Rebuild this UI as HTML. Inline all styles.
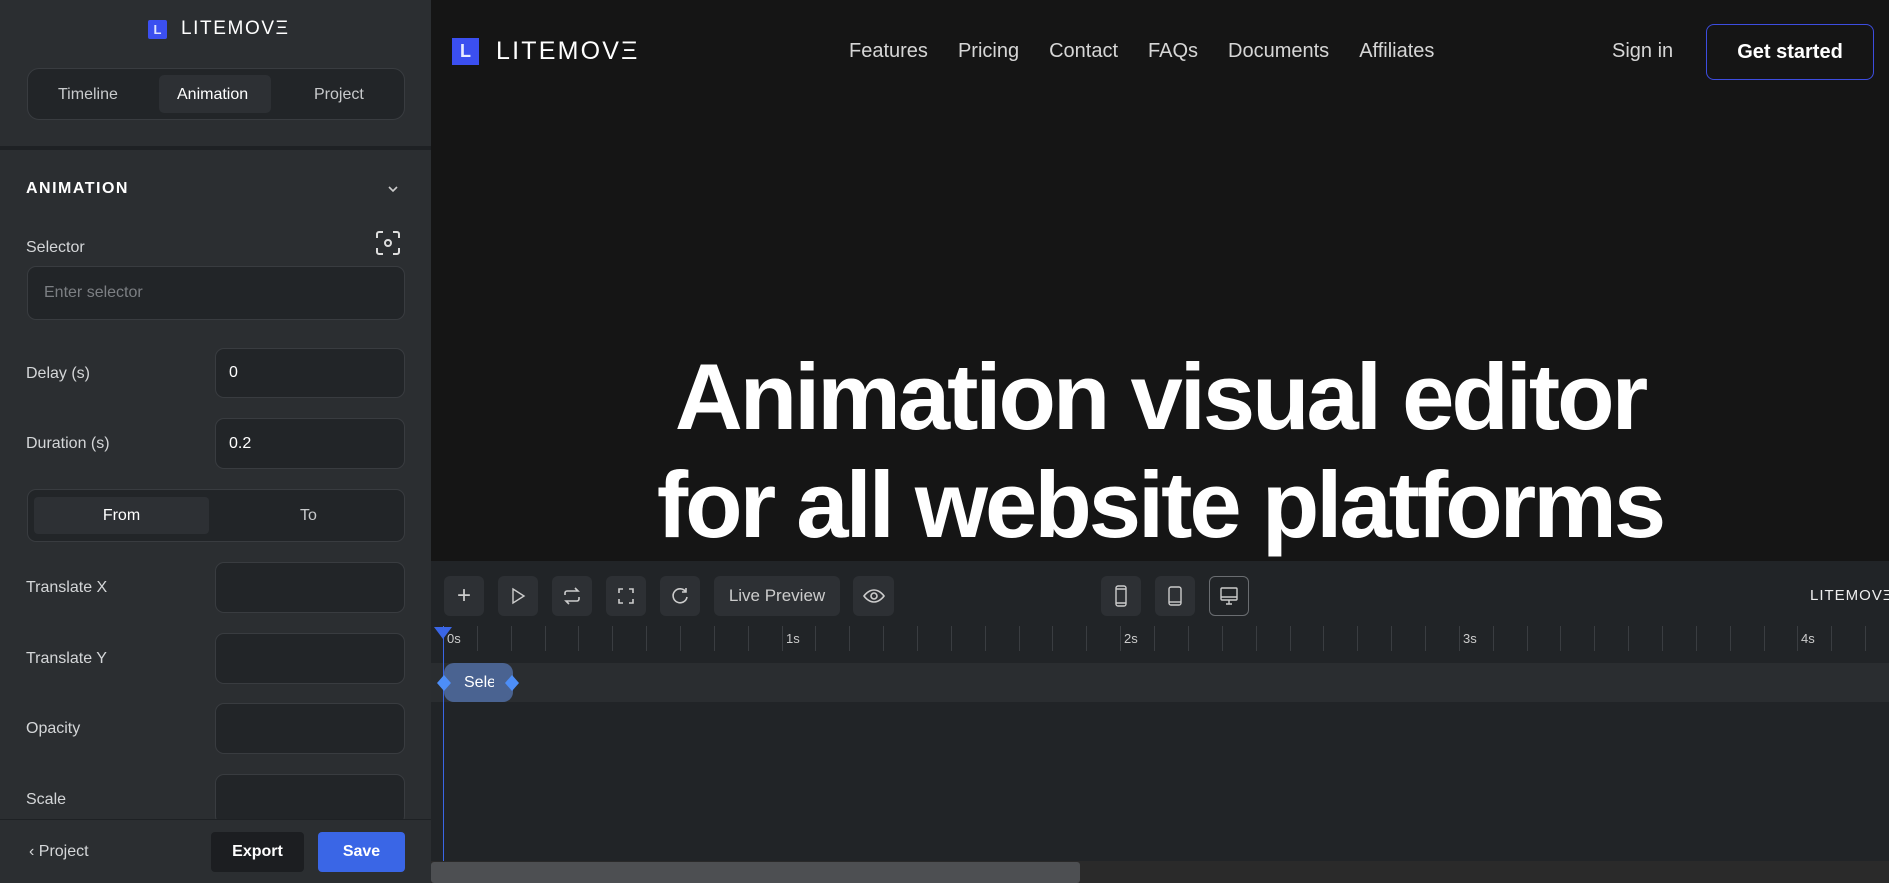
<!DOCTYPE html>
<html><head><meta charset="utf-8"><style>
*{box-sizing:border-box;margin:0;padding:0}
body{width:1889px;height:883px;overflow:hidden;background:#151515;font-family:"Liberation Sans",sans-serif;position:relative;color:#ddd}
.a{position:absolute}
#left{left:0;top:0;width:431px;height:883px;background:#2b2e31}
.lbl{position:absolute;left:26px;font-size:16px;color:#d4d6d8}
.inp{position:absolute;background:#222528;border:1px solid #393c40;border-radius:9px;font-size:16px;color:#fff;padding-left:13px;display:flex;align-items:center}
.tb{position:absolute;top:576px;height:40px;background:#2d3034;border-radius:6px;display:flex;align-items:center;justify-content:center;color:#ccc}
.tick{position:absolute;top:626px;width:1px;height:25px;background:#3a3d41}
.sec{position:absolute;top:631px;font-size:13px;color:#ccc}
</style></head><body>
<div id="left" class="a">
  <div class="a" style="left:148px;top:20px;width:19px;height:19px;background:#3b4ff0;border-radius:2px;color:#dfe3ff;font-size:13px;font-weight:bold;text-align:center;line-height:19px">L</div>
  <div class="a" style="left:181px;top:18px;font-size:19px;letter-spacing:1.6px;color:#fff">LITEMOVΞ</div>
  <div class="a" style="left:27px;top:68px;width:378px;height:52px;background:#222528;border:1px solid #393c40;border-radius:12px"></div>
  <div class="a" style="left:159px;top:75px;width:112px;height:38px;background:#2d3034;border-radius:5px"></div>
  <div class="a" style="left:58px;top:86px;font-size:16px;color:#c8cacc">Timeline</div>
  <div class="a" style="left:177px;top:86px;font-size:16px;color:#fff">Animation</div>
  <div class="a" style="left:314px;top:86px;font-size:16px;color:#c8cacc">Project</div>
  <div class="a" style="left:0;top:146px;width:431px;height:4px;background:#1e2124"></div>
  <div class="a" style="left:26px;top:180px;font-size:16px;font-weight:bold;letter-spacing:1.5px;color:#fff">ANIMATION</div>
  <svg class="a" style="left:386px;top:182px" width="14" height="14" viewBox="0 0 14 14"><path d="M3 5l4 4 4-4" stroke="#ccc" stroke-width="1.6" fill="none"/></svg>
  <div class="lbl" style="top:239px">Selector</div>
  <svg class="a" style="left:375px;top:230px" width="26" height="26" viewBox="0 0 26 26" fill="none" stroke="#ddd" stroke-width="2"><path d="M2 8V4a2 2 0 0 1 2-2h4M18 2h4a2 2 0 0 1 2 2v4M24 18v4a2 2 0 0 1-2 2h-4M8 24H4a2 2 0 0 1-2-2v-4"/><circle cx="13" cy="13" r="3"/></svg>
  <div class="inp" style="left:27px;top:266px;width:378px;height:54px;color:#7c7f83;padding-left:16px">Enter selector</div>
  <div class="lbl" style="top:365px">Delay (s)</div>
  <div class="inp" style="left:215px;top:348px;width:190px;height:50px">0</div>
  <div class="lbl" style="top:435px">Duration (s)</div>
  <div class="inp" style="left:215px;top:418px;width:190px;height:51px">0.2</div>
  <div class="a" style="left:27px;top:489px;width:378px;height:53px;background:#222528;border:1px solid #393c40;border-radius:9px"></div>
  <div class="a" style="left:34px;top:497px;width:175px;height:37px;background:#2d3034;border-radius:4px;text-align:center;line-height:37px;font-size:16px;color:#fff">From</div>
  <div class="a" style="left:300px;top:507px;font-size:16px;color:#c8cacc">To</div>
  <div class="lbl" style="top:579px">Translate X</div>
  <div class="inp" style="left:215px;top:562px;width:190px;height:51px"></div>
  <div class="lbl" style="top:650px">Translate Y</div>
  <div class="inp" style="left:215px;top:633px;width:190px;height:51px"></div>
  <div class="lbl" style="top:720px">Opacity</div>
  <div class="inp" style="left:215px;top:703px;width:190px;height:51px"></div>
  <div class="lbl" style="top:791px">Scale</div>
  <div class="inp" style="left:215px;top:774px;width:190px;height:51px"></div>
  <div class="a" style="left:0;top:819px;width:431px;height:64px;background:#2b2e31;border-top:1px solid #1e2124"></div>
  <div class="a" style="left:29px;top:843px;font-size:16px;color:#d4d6d8">‹ Project</div>
  <div class="a" style="left:211px;top:832px;width:93px;height:40px;background:#1c1e21;border-radius:4px;text-align:center;line-height:40px;font-size:16px;font-weight:bold;color:#fff">Export</div>
  <div class="a" style="left:318px;top:832px;width:87px;height:40px;background:#3a66e6;border-radius:4px;text-align:center;line-height:40px;font-size:16px;font-weight:bold;color:#fff">Save</div>
</div>

<!-- nav -->
<div class="a" style="left:452px;top:38px;width:27px;height:27px;background:#3b4ff0;color:#e8ebff;font-weight:bold;font-size:18px;text-align:center;line-height:27px">L</div>
<div class="a" style="left:496px;top:37px;font-size:25px;letter-spacing:2.2px;color:#fff">LITEMOVΞ</div>
<div class="a" style="left:849px;top:40px;font-size:20px;color:#d6d6d6;white-space:nowrap">
<span style="margin-right:30px">Features</span><span style="margin-right:30px">Pricing</span><span style="margin-right:30px">Contact</span><span style="margin-right:30px">FAQs</span><span style="margin-right:30px">Documents</span><span>Affiliates</span></div>
<div class="a" style="left:1612px;top:40px;font-size:20px;color:#d6d6d6">Sign in</div>
<div class="a" style="left:1706px;top:24px;width:168px;height:56px;border:1px solid #3d4de0;border-radius:8px;text-align:center;line-height:54px;font-size:20px;font-weight:bold;color:#fff">Get started</div>

<div class="a" style="left:431px;top:343px;width:1458px;text-align:center;font-size:94px;font-weight:bold;letter-spacing:-3px;line-height:108px;color:#fff;white-space:nowrap">Animation visual editor<br>for all website platforms</div>

<!-- timeline -->
<div class="a" style="left:431px;top:561px;width:1458px;height:322px;background:#212427"></div>
<div class="tb" style="left:444px;width:40px;font-size:24px">+</div>
<div class="tb" style="left:498px;width:40px"><svg width="18" height="18" viewBox="0 0 18 18"><path d="M4 2l11 7-11 7z" fill="none" stroke="#ccc" stroke-width="1.4"/></svg></div>
<div class="tb" style="left:552px;width:40px"><svg width="20" height="20" viewBox="0 0 20 20" fill="none" stroke="#ccc" stroke-width="1.6"><path d="M3 9V7a2 2 0 0 1 2-2h11l-3-3M17 11v2a2 2 0 0 1-2 2H4l3 3"/></svg></div>
<div class="tb" style="left:606px;width:40px"><svg width="18" height="18" viewBox="0 0 18 18" fill="none" stroke="#ccc" stroke-width="1.6"><path d="M2 6V2h4M12 2h4v4M16 12v4h-4M6 16H2v-4"/></svg></div>
<div class="tb" style="left:660px;width:40px"><svg width="20" height="20" viewBox="0 0 20 20" fill="none" stroke="#ccc" stroke-width="1.6"><path d="M16 6A7 7 0 1 0 17 11M16 2v4h-4"/></svg></div>
<div class="tb" style="left:714px;width:126px;font-size:17px;color:#ccc">Live Preview</div>
<div class="tb" style="left:853px;width:41px"><svg width="22" height="16" viewBox="0 0 22 16" fill="none" stroke="#ccc" stroke-width="1.6"><path d="M1 8s4-6 10-6 10 6 10 6-4 6-10 6S1 8 1 8z"/><circle cx="11" cy="8" r="3"/></svg></div>
<div class="tb" style="left:1101px;width:40px"><svg width="14" height="22" viewBox="0 0 14 22" fill="none" stroke="#ccc" stroke-width="1.4"><rect x="2" y="1" width="10" height="20" rx="2"/><path d="M2 4h10M2 18h10"/></svg></div>
<div class="tb" style="left:1155px;width:40px"><svg width="16" height="22" viewBox="0 0 16 22" fill="none" stroke="#ccc" stroke-width="1.4"><rect x="2" y="2" width="12" height="18" rx="2"/><path d="M2 17h12"/></svg></div>
<div class="tb" style="left:1209px;width:40px;background:#212427;border:1px solid #6a6d71"><svg width="20" height="20" viewBox="0 0 20 20" fill="none" stroke="#ccc" stroke-width="1.4"><rect x="2" y="2" width="16" height="12" rx="1"/><path d="M2 11h16M10 14v4M7 18h6"/></svg></div>
<div class="a" style="left:1810px;top:587px;font-size:15px;letter-spacing:1px;color:#eee">LITEMOVΞ</div>

<div id="ticks"></div>
<div class="a" style="left:431px;top:663px;width:1458px;height:39px;background:#2a2d30"></div>
<div class="a" style="left:443px;top:626px;width:1px;height:235px;background:#3a66e6"></div>
<svg class="a" style="left:434px;top:627px" width="18" height="12"><path d="M0 0h18L9 12z" fill="#3a66e6"/></svg>
<div class="a" style="left:444px;top:663px;width:69px;height:39px;background:#4a6391;border-radius:10px;font-size:16px;color:#fff;line-height:39px;padding-left:20px;overflow:hidden"><span style="display:inline-block;width:30px;overflow:hidden;vertical-align:top">Selector</span></div>
<svg class="a" style="left:437px;top:675px" width="14" height="16"><path d="M7 0l7 8-7 8-7-8z" fill="#4d8ef7"/></svg>
<svg class="a" style="left:505px;top:675px" width="14" height="16"><path d="M7 0l7 8-7 8-7-8z" fill="#4d8ef7"/></svg>
<div class="a" style="left:431px;top:861px;width:1458px;height:22px;background:#2a2a2a"></div>
<div class="a" style="left:431px;top:862px;width:649px;height:21px;background:#4d4f52;border-radius:3px"></div>
<script>
var h='';var x0=443,s=338.6;
for(var i=0;i<44;i++){var x=x0+i*s/10;if(x>1889)break;h+='<div class="tick" style="left:'+Math.round(x)+'px"></div>';if(i%10==0)h+='<div class="sec" style="left:'+Math.round(x+4)+'px">'+(i/10)+'s</div>';}
document.getElementById('ticks').innerHTML=h;
</script>
</body></html>
